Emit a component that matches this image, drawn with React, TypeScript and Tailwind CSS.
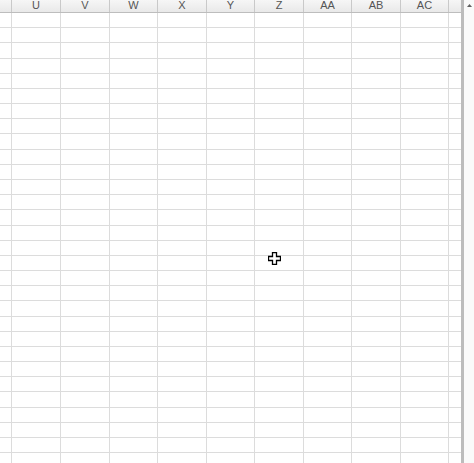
const COLUMNS = ["U", "V", "W", "X", "Y", "Z", "AA", "AB", "AC"];
const COL_WIDTHS = ["w-[49px]", "w-[49px]", "w-[48px]", "w-[49px]", "w-[48px]", "w-[49px]", "w-[48px]", "w-[49px]", "w-[48px]"];

// row lines sit at 27 + i * 15.18, so heights alternate 15 / 16
const ROW_HEIGHTS: number[] = [];
for (let i = 0; i < 30; i++) {
  const a = Math.round(i * 15.1786);
  const b = Math.round((i + 1) * 15.1786);
  ROW_HEIGHTS.push(b - a);
}

function Cursor() {
  return (
    <svg width="13" height="13" viewBox="0 0 13 13" className="absolute left-[268px] top-[252px]">
      <path
        d="M4.5 0.5 H8.5 V4.5 H12.5 V8.5 H8.5 V12.5 H4.5 V8.5 H0.5 V4.5 H4.5 Z"
        fill="#ffffff"
        stroke="#000000"
        strokeWidth="1.3"
      />
    </svg>
  );
}

function Row({ height }: { height: number }) {
  return (
    <div className={`flex shrink-0 border-b border-[#dcdcdc] ${height === 16 ? "h-[16px]" : "h-[15px]"}`}>
      <div className="w-[12px] shrink-0 border-r border-[#dcdcdc]" />
      {COL_WIDTHS.map((w, i) => (
        <div key={i} className={`${w} shrink-0 border-r border-[#dcdcdc]`} />
      ))}
      <div className="flex-1" />
    </div>
  );
}

export default function App() {
  return (
    <div className="relative flex h-[463px] w-[474px] overflow-hidden bg-white font-['Liberation_Sans',Arial,sans-serif]">
      <div className="flex w-[461px] shrink-0 flex-col">
        <div className="flex h-[13px] shrink-0 border-b border-[#bdbdbd] bg-gradient-to-b from-[#f6f6f6] to-[#e9e9e9] text-[11px] leading-[10px] text-[#555555]">
          <div className="w-[12px] shrink-0 border-r border-[#c9c9c9]" />
          {COLUMNS.map((c, i) => (
            <div
              key={c}
              className={`${COL_WIDTHS[i]} flex shrink-0 items-start justify-center border-r border-[#c9c9c9]`}
            >
              {c}
            </div>
          ))}
          <div className="flex-1" />
        </div>
        {ROW_HEIGHTS.map((h, i) => (
          <Row key={i} height={h} />
        ))}
      </div>
      <div className="flex w-[13px] shrink-0 flex-col border-l-[3px] border-[#bcbcbc] bg-[#fafafa]">
        <div className="flex h-[11px] items-center justify-center">
          <svg width="5" height="3" viewBox="0 0 5 3">
            <path d="M2.5 0 L5 3 H0 Z" fill="#606060" />
          </svg>
        </div>
      </div>
      <Cursor />
    </div>
  );
}
